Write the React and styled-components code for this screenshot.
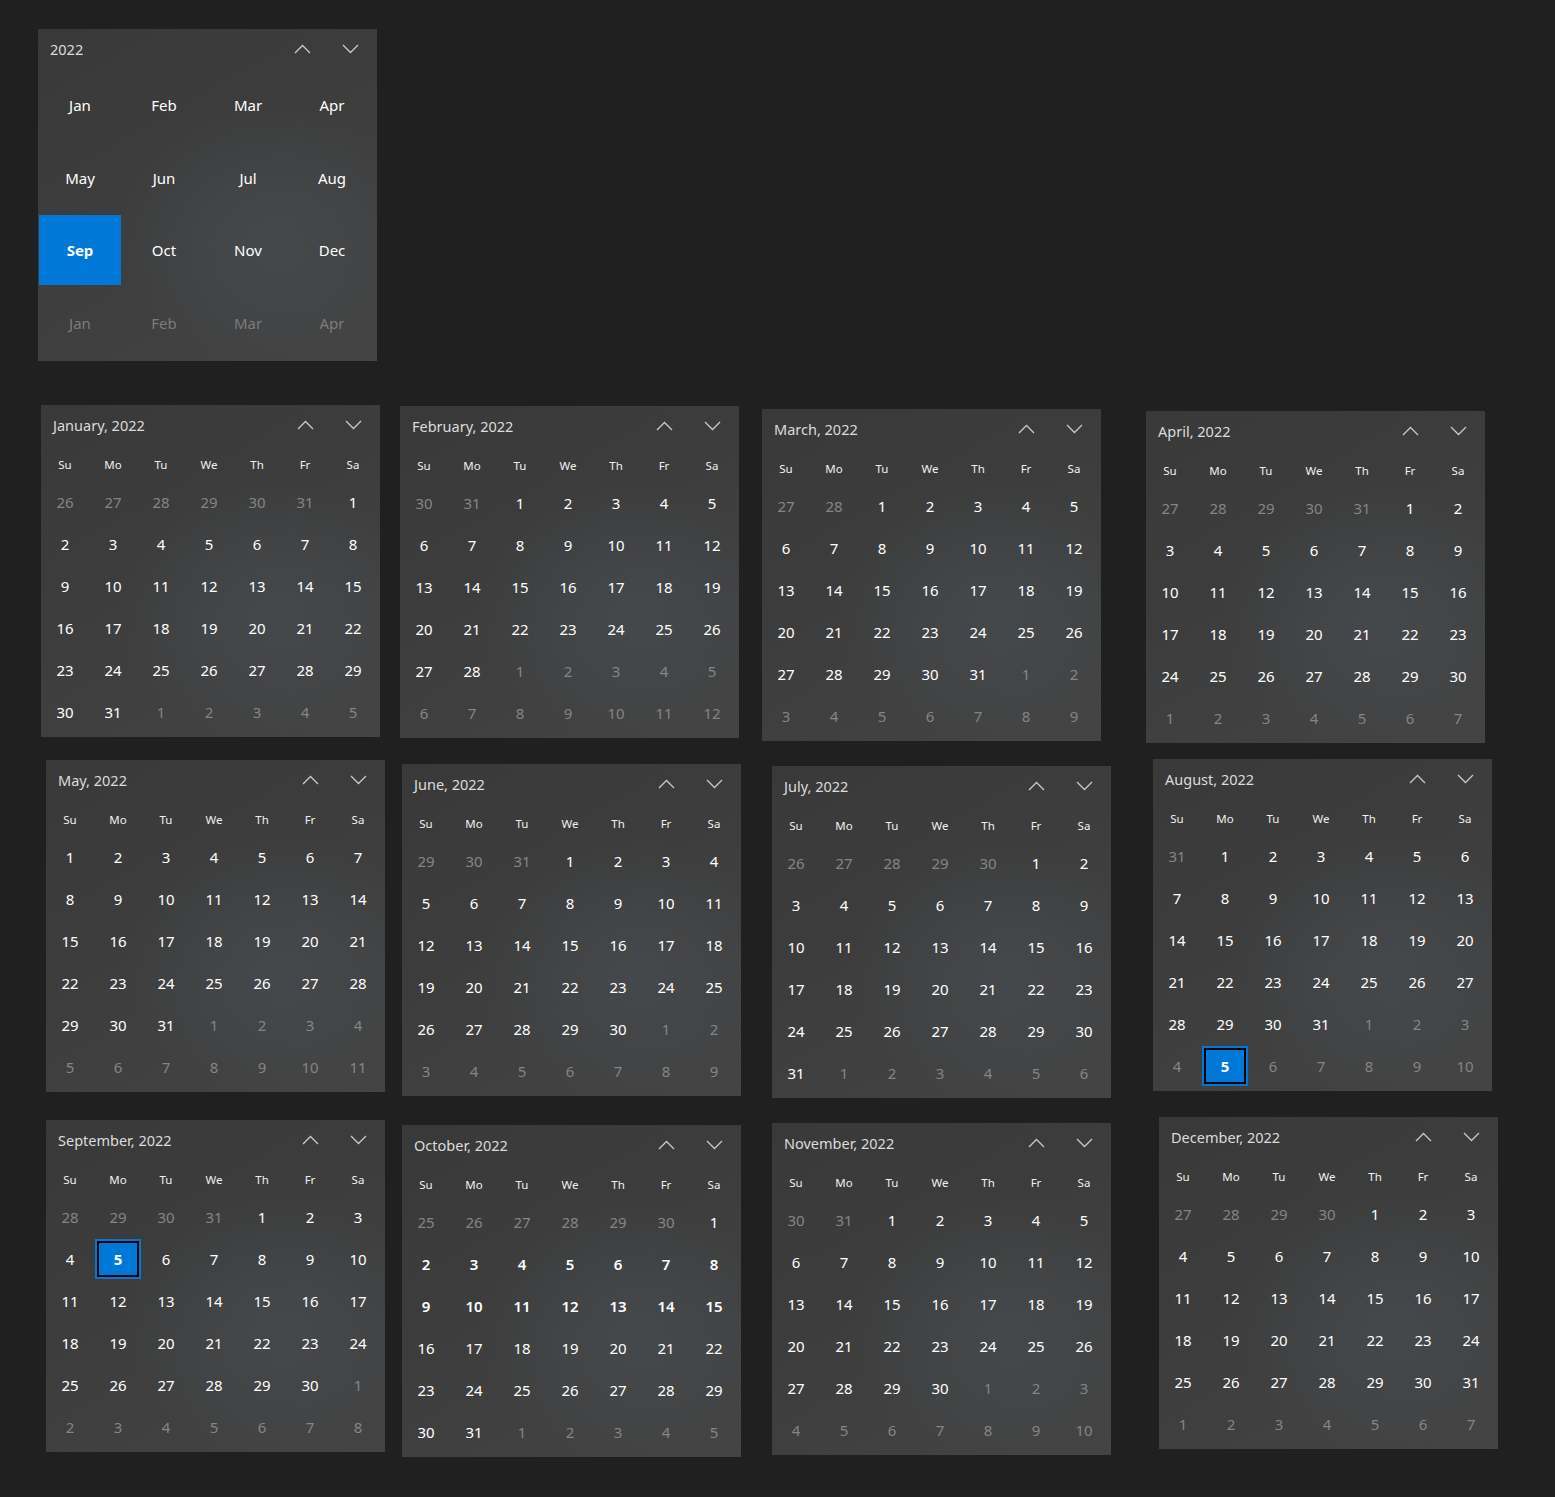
import React from "react";
import styled, { createGlobalStyle, css } from "styled-components";

const GlobalStyle = createGlobalStyle`
  html, body {
    margin: 0;
    padding: 0;
    background: #202020;
  }
  body {
    font-family: "Noto Sans", "Open Sans", sans-serif;
  }
`;

const MONTHS = [
  "January", "February", "March", "April", "May", "June",
  "July", "August", "September", "October", "November", "December",
];
const SHORT = ["Jan", "Feb", "Mar", "Apr", "May", "Jun", "Jul", "Aug", "Sep", "Oct", "Nov", "Dec"];
const WEEKDAYS = ["Su", "Mo", "Tu", "We", "Th", "Fr", "Sa"];

// offsets of each calendar inside its row: [marginLeft, marginTop]
const rows = [
  {
    top: 44,
    items: [
      { month: 0, ml: 41, mt: 0 },
      { month: 1, ml: 20, mt: 1 },
      { month: 2, ml: 23, mt: 4 },
      { month: 3, ml: 45, mt: 6 },
    ],
  },
  {
    top: 16,
    items: [
      { month: 4, ml: 46, mt: 1 },
      { month: 5, ml: 17, mt: 5 },
      { month: 6, ml: 31, mt: 7 },
      { month: 7, ml: 42, mt: 0, selected: { m: 8, d: 5 } },
    ],
  },
  {
    top: 19,
    items: [
      { month: 8, ml: 46, mt: 3, selected: { m: 8, d: 5 } },
      { month: 9, ml: 17, mt: 8, bold: [2, 15] },
      { month: 10, ml: 31, mt: 6 },
      { month: 11, ml: 48, mt: 0 },
    ],
  },
];

function buildDays(month) {
  const first = new Date(2022, month, 1);
  const start = new Date(2022, month, 1 - first.getDay());
  const days = [];
  for (let i = 0; i < 42; i++) {
    const d = new Date(start.getFullYear(), start.getMonth(), start.getDate() + i);
    days.push({ day: d.getDate(), month: d.getMonth(), inMonth: d.getMonth() === month });
  }
  return days;
}

function Chevron({ up }) {
  return (
    <svg width="17" height="10" viewBox="0 0 17 10">
      <polyline
        points={up ? "1,9 8.5,1.5 16,9" : "1,1 8.5,8.5 16,1"}
        fill="none"
        stroke="#c9c9c9"
        strokeWidth="1.3"
      />
    </svg>
  );
}

function Header({ title }) {
  return (
    <HeaderBar>
      <Title>{title}</Title>
      <NavButton>
        <Chevron up />
      </NavButton>
      <NavButton>
        <Chevron />
      </NavButton>
    </HeaderBar>
  );
}

function MonthCalendar({ month, ml, mt, selected, bold }) {
  const days = buildDays(month);
  return (
    <Panel $ml={ml} $mt={mt}>
      <Header title={`${MONTHS[month]}, 2022`} />
      <WeekRow>
        {WEEKDAYS.map((w) => (
          <WeekDay key={w}>{w}</WeekDay>
        ))}
      </WeekRow>
      <DayGrid>
        {days.map((d, i) => {
          const isSel = selected && selected.m === d.month && selected.d === d.day;
          const isBold = bold && d.inMonth && d.day >= bold[0] && d.day <= bold[1];
          return (
            <DayCell key={i} $muted={!d.inMonth} $bold={isBold}>
              {isSel ? <Selected>{d.day}</Selected> : d.day}
            </DayCell>
          );
        })}
      </DayGrid>
    </Panel>
  );
}

function YearPicker() {
  const cells = [...SHORT, "Jan", "Feb", "Mar", "Apr"];
  return (
    <Panel $ml={38} $mt={0}>
      <Header title="2022" />
      <MonthGrid>
        {cells.map((m, i) => (
          <MonthCell key={i} $muted={i >= 12} $active={i === 8}>
            {m}
          </MonthCell>
        ))}
      </MonthGrid>
    </Panel>
  );
}

export default function App() {
  return (
    <>
      <GlobalStyle />
      <Page>
        <YearPicker />
        {rows.map((row, r) => (
          <Row key={r} $top={row.top}>
            {row.items.map((it) => (
              <MonthCalendar key={it.month} {...it} />
            ))}
          </Row>
        ))}
      </Page>
    </>
  );
}

const Page = styled.div`
  min-height: 1497px;
  padding-top: 29px;
  box-sizing: border-box;
  background: #202020;
  display: flex;
  flex-direction: column;
  align-items: flex-start;
`;

const Row = styled.div`
  display: flex;
  align-items: flex-start;
  margin-top: ${(p) => p.$top}px;
`;

const Panel = styled.div`
  width: 339px;
  height: 332px;
  flex-shrink: 0;
  margin-left: ${(p) => p.$ml}px;
  margin-top: ${(p) => p.$mt}px;
  background:
    radial-gradient(ellipse 45% 40% at 68% 62%, rgba(74, 80, 86, 0.55), rgba(74, 80, 86, 0) 100%),
    linear-gradient(150deg, #393939 0%, #3d3d3d 45%, #444444 100%);
  color: #ffffff;
  overflow: hidden;
`;

const HeaderBar = styled.div`
  height: 40px;
  display: flex;
  align-items: center;
  padding: 0 3px 0 12px;
`;

const Title = styled.div`
  flex: 1;
  font-size: 14.5px;
  color: #dcdcdc;
`;

const NavButton = styled.div`
  width: 48px;
  height: 40px;
  display: flex;
  align-items: center;
  justify-content: center;
`;

const WeekRow = styled.div`
  display: grid;
  grid-template-columns: repeat(7, 48px);
  height: 36px;
  padding-top: 3px;
  box-sizing: border-box;
`;

const WeekDay = styled.div`
  display: flex;
  align-items: center;
  justify-content: center;
  font-size: 11.5px;
  color: #f0f0f0;
`;

const DayGrid = styled.div`
  display: grid;
  grid-template-columns: repeat(7, 48px);
  grid-auto-rows: 42px;
`;

const DayCell = styled.div`
  display: flex;
  align-items: center;
  justify-content: center;
  font-size: 15px;
  color: ${(p) => (p.$muted ? "#858585" : "#ffffff")};
  font-weight: ${(p) => (p.$bold ? 600 : 400)};
`;

const Selected = styled.div`
  width: 46px;
  height: 40px;
  display: flex;
  align-items: center;
  justify-content: center;
  box-sizing: border-box;
  background: #0078d7;
  box-shadow: inset 0 0 0 2px #0078d7, inset 0 0 0 4px #000000;
  color: #ffffff;
  font-weight: 700;
`;

const MonthGrid = styled.div`
  display: grid;
  grid-template-columns: repeat(4, 84px);
  grid-auto-rows: 72.5px;
`;

const MonthCell = styled.div`
  display: flex;
  align-items: center;
  justify-content: center;
  margin: 1px 1px 1.5px 1px;
  font-size: 15px;
  color: ${(p) => (p.$muted ? "#7c7c7c" : "#ffffff")};
  ${(p) =>
    p.$active &&
    css`
      background: #0078d7;
      font-weight: 700;
    `}
`;
